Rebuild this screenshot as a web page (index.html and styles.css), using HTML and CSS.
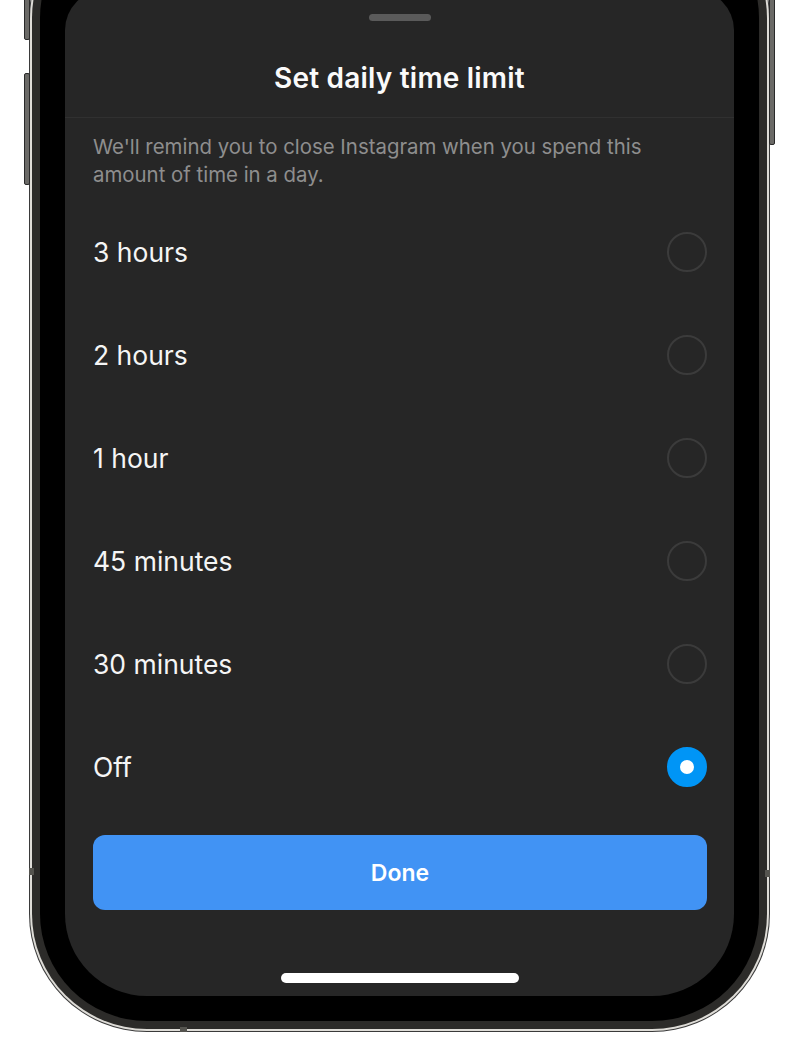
FILE: index.html
```html
<!DOCTYPE html>
<html lang="en">
<head>
    <meta charset="UTF-8">
    <meta name="viewport" content="width=device-width, initial-scale=1.0">
    <title>Set daily time limit</title>
    <link rel="stylesheet" href="styles.css">
</head>
<body>
    <div class="phone">
        <!-- Hardware buttons and antenna breaks on the frame -->
        <span class="side-btn btn-silent"></span>
        <span class="side-btn btn-volume"></span>
        <span class="side-btn btn-power"></span>
        <span class="antenna antenna-left"></span>
        <span class="antenna antenna-right"></span>
        <span class="antenna antenna-bottom"></span>

        <div class="rim">
            <div class="band">
                <div class="bezel">
                    <div class="screen">
                        <!-- Bottom sheet -->
                        <div class="sheet">
                            <div class="grabber"></div>
                            <div class="sheet-header">
                                <h1>Set daily time limit</h1>
                            </div>

                            <div class="sheet-body">
                                <p class="hint">We'll remind you to close Instagram when you spend this amount of time in a day.</p>

                                <div class="options">
                                    <label class="option">
                                        <span>3 hours</span>
                                        <span class="radio"></span>
                                    </label>
                                    <label class="option">
                                        <span>2 hours</span>
                                        <span class="radio"></span>
                                    </label>
                                    <label class="option">
                                        <span>1 hour</span>
                                        <span class="radio"></span>
                                    </label>
                                    <label class="option">
                                        <span>45 minutes</span>
                                        <span class="radio"></span>
                                    </label>
                                    <label class="option">
                                        <span>30 minutes</span>
                                        <span class="radio"></span>
                                    </label>
                                    <label class="option">
                                        <span>Off</span>
                                        <span class="radio checked"></span>
                                    </label>
                                </div>

                                <button class="done">Done</button>
                            </div>

                            <div class="home-indicator"></div>
                        </div>
                    </div>
                </div>
            </div>
        </div>
    </div>
</body>
</html>
```

FILE: styles.css
```css
body {
    margin: 0;
    background: #fff;
    font-family: Inter, "Noto Sans", sans-serif;
    overflow: hidden;
}

/* Phone frame: outline > silver rim > steel band > black bezel > screen */
.phone {
    position: relative;
    width: 741px;
    margin: -100px 0 0 29px;
    padding: 1px;
    box-sizing: border-box;
    background: #3a3a3a;
    border-radius: 118px;
}

.rim {
    padding: 2px;
    background: #dedcd7;
    border-radius: 117px;
}

.band {
    padding: 8px;
    background: #2c2b29;
    border-radius: 115px;
}

.bezel {
    padding: 25px;
    background: #000;
    border-radius: 107px;
}

.screen {
    padding-top: 54px;
    background: #000;
    border-radius: 82px;
    overflow: hidden;
}

.side-btn {
    position: absolute;
    width: 4px;
    background: #6b6a67;
    border: 1px solid #2a2a2a;
    border-radius: 2px;
}

.btn-silent {
    left: -5px;
    top: 60px;
    height: 78px;
}

.btn-volume {
    left: -5px;
    top: 173px;
    height: 110px;
}

.btn-power {
    right: -5px;
    top: 80px;
    height: 163px;
}

.antenna {
    position: absolute;
    background: #55544f;
}

.antenna-left {
    left: 0;
    top: 968px;
    width: 5px;
    height: 7px;
}

.antenna-right {
    right: 0;
    top: 970px;
    width: 5px;
    height: 7px;
}

.antenna-bottom {
    left: 151px;
    bottom: 0;
    width: 7px;
    height: 5px;
}

/* Sheet */
.sheet {
    height: 1006px;
    display: flex;
    flex-direction: column;
    background: #262626;
    border-radius: 40px 40px 0 0;
    color: #f5f5f5;
}

.grabber {
    width: 62px;
    height: 7px;
    margin: 24px auto 0;
    background: #5a5a5a;
    border-radius: 4px;
}

.sheet-header {
    padding: 40px 0 22px;
    border-bottom: 1px solid #303030;
}

.sheet-header h1 {
    margin: 0;
    font-size: 28px;
    font-weight: 600;
    line-height: 34px;
    letter-spacing: 0.2px;
    text-align: center;
    color: #fafafa;
}

.sheet-body {
    padding: 0 27px 0 28px;
}

.hint {
    margin: 15px 0 0;
    font-size: 20.4px;
    line-height: 28px;
    color: #8e8e8e;
}

.options {
    margin-top: 11px;
}

.option {
    display: flex;
    align-items: center;
    justify-content: space-between;
    height: 103px;
    font-size: 26.5px;
    color: #f5f5f5;
}

.radio {
    width: 40px;
    height: 40px;
    box-sizing: border-box;
    border: 2px solid #3b3b3b;
    border-radius: 50%;
}

.radio.checked {
    border: 13px solid #0095f6;
    background: #fff;
}

.done {
    display: block;
    width: 100%;
    height: 75px;
    margin-top: 17px;
    border: none;
    border-radius: 12px;
    background: #4193f4;
    color: #fff;
    font-family: inherit;
    font-size: 23px;
    font-weight: 600;
}

.home-indicator {
    width: 238px;
    height: 10px;
    margin: auto auto 13px;
    background: #fff;
    border-radius: 5px;
}
```
